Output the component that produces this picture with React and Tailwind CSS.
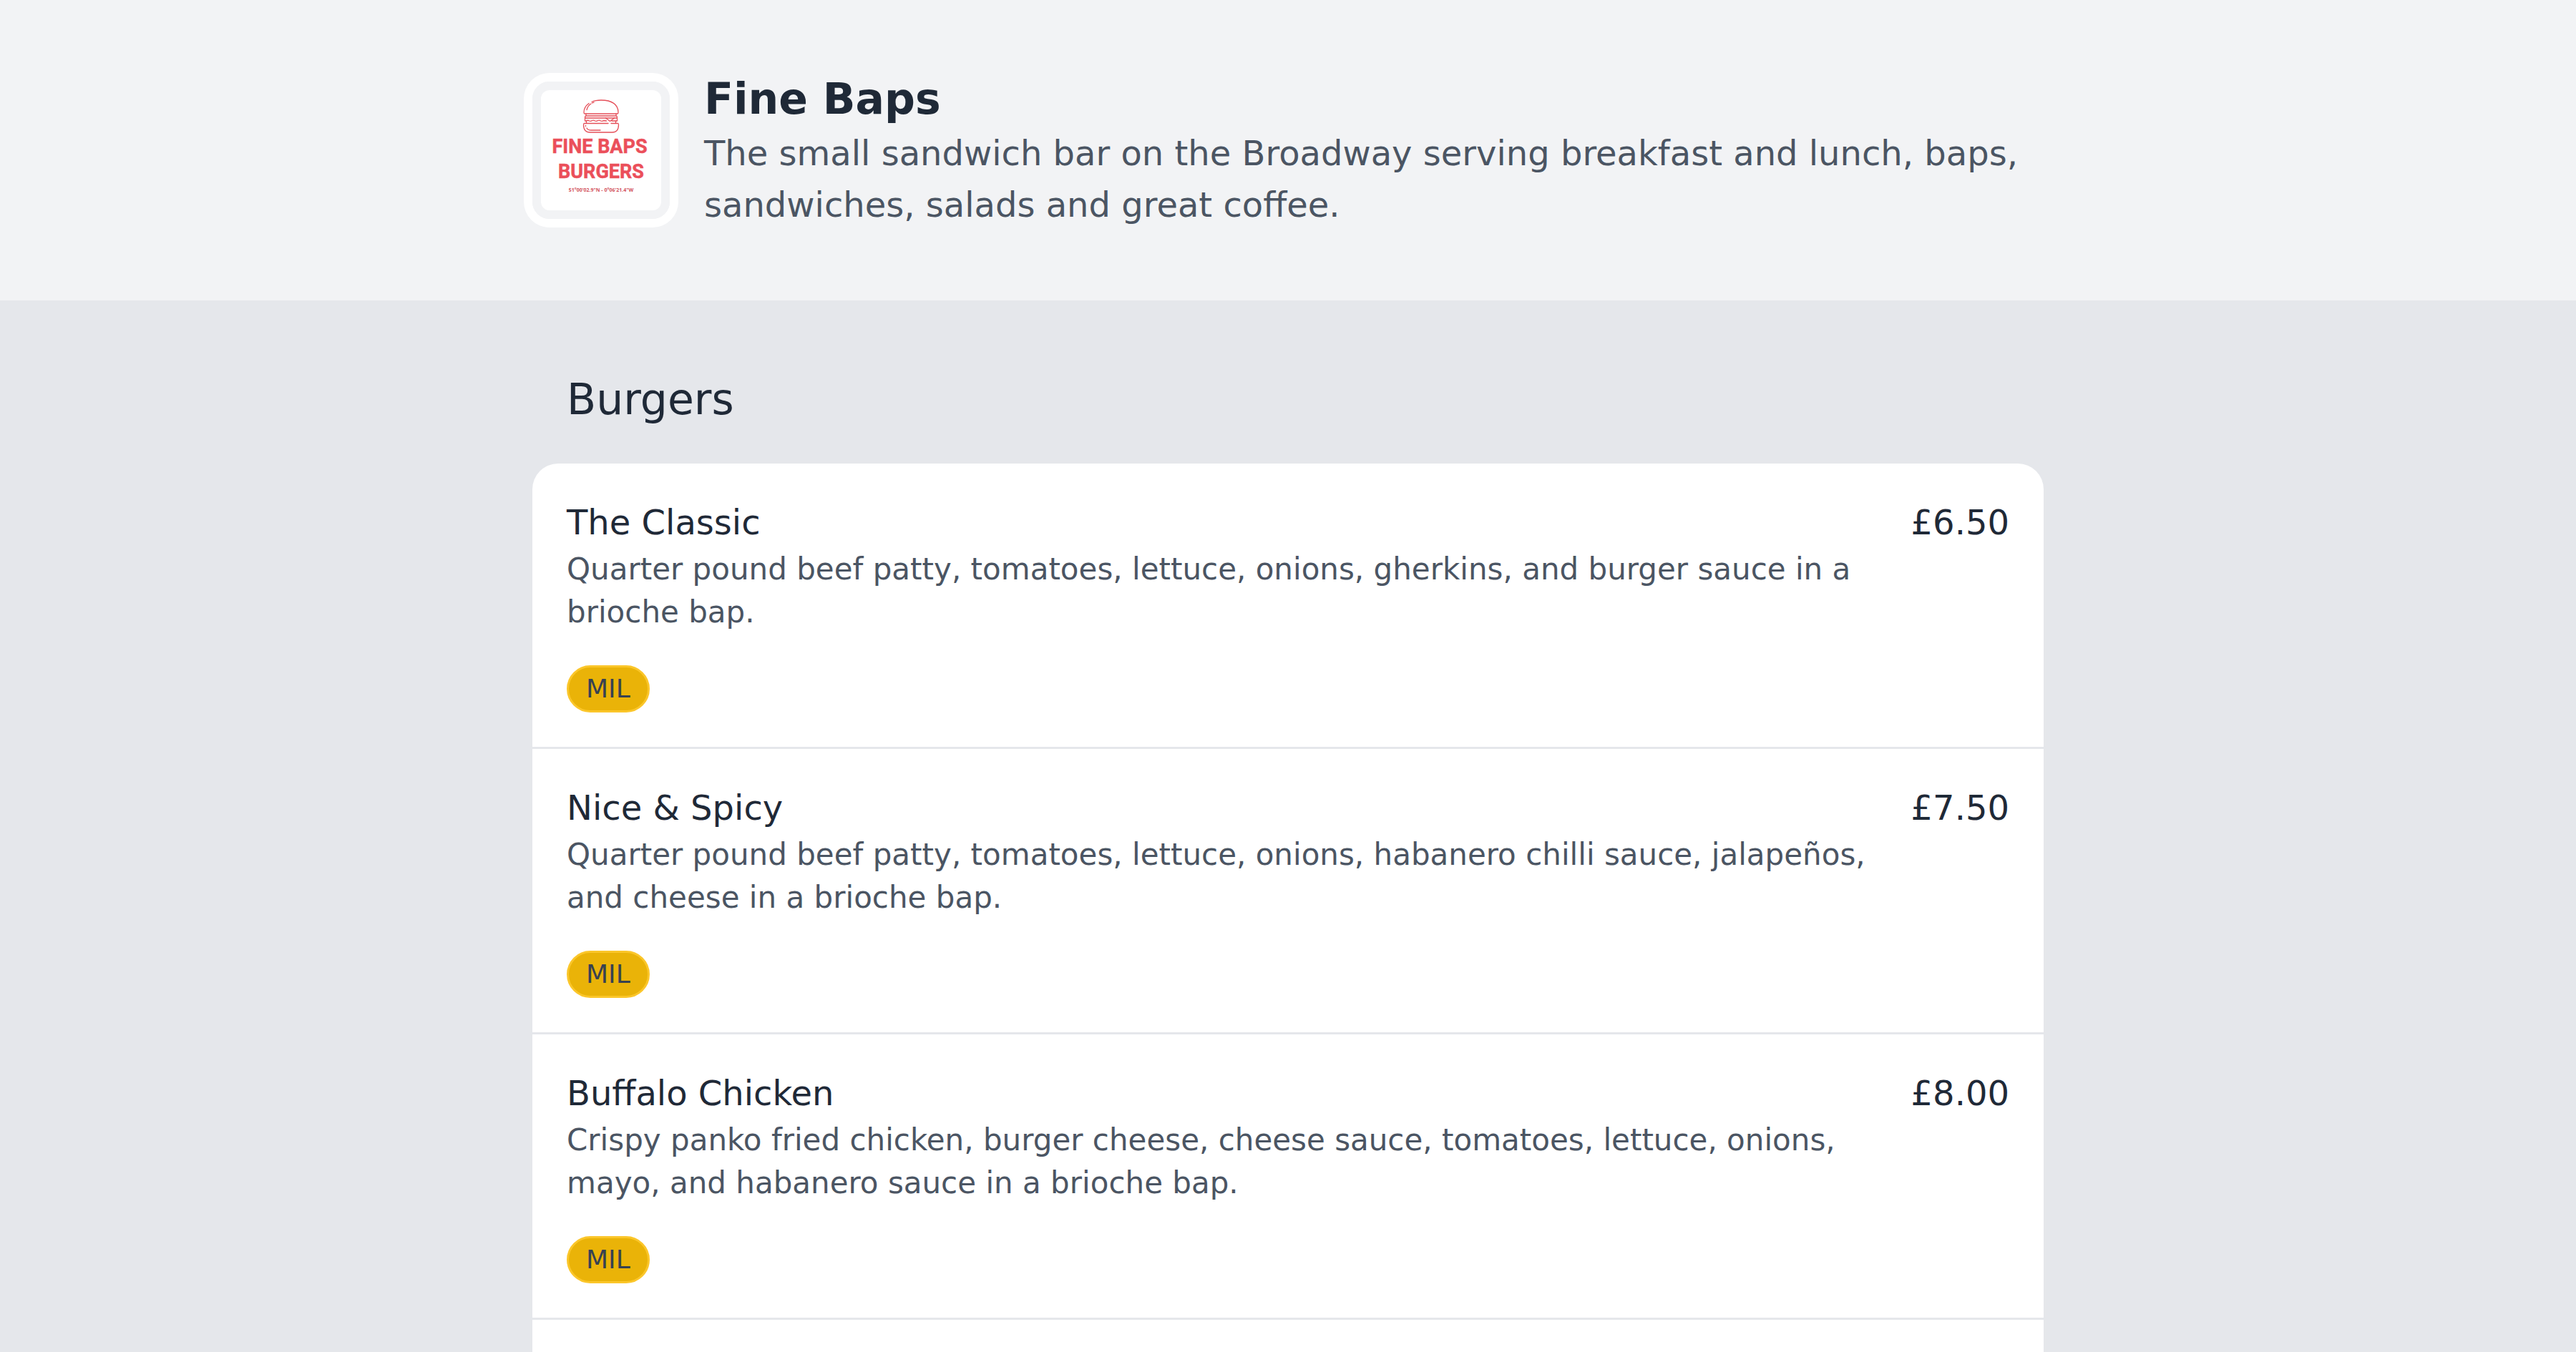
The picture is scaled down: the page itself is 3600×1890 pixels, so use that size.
import React from "react";

const burgers = [
  {
    name: "The Classic",
    price: "£6.50",
    description:
      "Quarter pound beef patty, tomatoes, lettuce, onions, gherkins, and burger sauce in a brioche bap.",
    allergens: ["MIL"],
  },
  {
    name: "Nice & Spicy",
    price: "£7.50",
    description:
      "Quarter pound beef patty, tomatoes, lettuce, onions, habanero chilli sauce, jalapeños, and cheese in a brioche bap.",
    allergens: ["MIL"],
  },
  {
    name: "Buffalo Chicken",
    price: "£8.00",
    description:
      "Crispy panko fried chicken, burger cheese, cheese sauce, tomatoes, lettuce, onions, mayo, and habanero sauce in a brioche bap.",
    allergens: ["MIL"],
  },
];

function Logo() {
  return (
    <svg
      viewBox="0 0 168 168"
      role="img"
      aria-label="Fine Baps Burgers"
      className="size-full rounded-xl bg-white"
    >
      <g
        fill="none"
        stroke="#e5505a"
        strokeWidth="1.3"
        strokeLinecap="round"
        strokeLinejoin="round"
      >
        {/* top bun */}
        <path d="M61 33h46q1 0 1-2c0-11-9-17-24-17q-8 0-13 2.500M67 18.500q-7 5-7 12.500 0 2 1 2" />
        <path d="M64 27.500q1.500-6 6-8.500M71.500 18l2.500-.800" />
        {/* filling */}
        <path d="M63 33v3h42v-3M63 36q-1.500 0-1.500 3h45q0-3-1.500-3M61.500 39v4h2v3M106.500 39v4h-2v3" />
        <path d="M63.500 43q2-1.500 4 0 2 1 4-.500 2-1 4 .500 2 1 4-.500 2-1 4 .500 2 1 4-.500l4 .500M90.500 39l6 4.500 6-4.500M99 43h5" />
        {/* bottom bun */}
        <path d="M94 46.500H60.500q-1 0-1 2c0 7 3 10.500 9 10.500h31c6 0 9-3.500 9-10.500q0-2-1-2H98" />
        <path d="M62.500 49.500v1M64 53q1.500 3 6 3h13" />
      </g>
      <g
        fill="#eb4f5a"
        stroke="#eb4f5a"
        strokeWidth="0.5"
        textAnchor="middle"
        fontFamily="Roboto, sans-serif"
        fontWeight="700"
      >
        <text x="82" y="88" fontSize="27">
          FINE BAPS
        </text>
        <text x="84" y="123" fontSize="27">
          BURGERS
        </text>
      </g>
      <text
        x="84"
        y="142"
        textAnchor="middle"
        fill="#d2525c"
        fontFamily="'Open Sans', sans-serif"
        fontSize="7"
        fontWeight="700"
      >
        51°00'02.9"N - 0°06'21.4"W
      </text>
    </svg>
  );
}

function MenuItem({ item }) {
  return (
    <li className="flex justify-between gap-12 border-b-3 border-gray-200 px-12 pt-[46px] pb-12">
      <div>
        <h3 className="text-[48px] leading-[72px] text-[#1f2937]">{item.name}</h3>
        <p className="text-[42px] leading-[60px] text-[#4b5563]">
          {item.description}
        </p>
        <div className="mt-11 flex gap-3">
          {item.allergens.map((code) => (
            <span
              key={code}
              className="rounded-full border-3 border-[#fbc62a] bg-[#eab308] px-6 py-1.5 text-[36px] leading-[48px] text-[#374151]"
            >
              {code}
            </span>
          ))}
        </div>
      </div>
      <p className="text-[48px] leading-[72px] text-[#1f2937]">{item.price}</p>
    </li>
  );
}

export default function App() {
  return (
    <div className="flex min-h-screen flex-col bg-[#e5e7eb] font-['DejaVu_Sans',sans-serif]">
      <header className="bg-[#f2f3f5]">
        <div className="mx-auto flex max-w-[2304px] items-center gap-12 px-24 py-[98px]">
          <div className="size-48 shrink-0 rounded-3xl border-12 border-[#f2f3f5] ring-12 ring-white">
            <Logo />
          </div>
          <div>
            <h1 className="text-[60px] leading-[80px] font-bold text-[#1f2937]">
              Fine Baps
            </h1>
            <p className="text-[48px] leading-[72px] text-[#4b5563]">
              The small sandwich bar on the Broadway serving breakfast and lunch,
              baps, sandwiches, salads and great coffee.
            </p>
          </div>
        </div>
      </header>

      <main className="mx-auto flex w-full max-w-[2304px] flex-1 flex-col px-24 pt-24">
        <h2 className="mb-12 px-12 text-[60px] leading-[84px] text-[#1f2937]">
          Burgers
        </h2>
        <ul className="flex-1 rounded-t-[36px] bg-white">
          {burgers.map((item) => (
            <MenuItem key={item.name} item={item} />
          ))}
        </ul>
      </main>
    </div>
  );
}
